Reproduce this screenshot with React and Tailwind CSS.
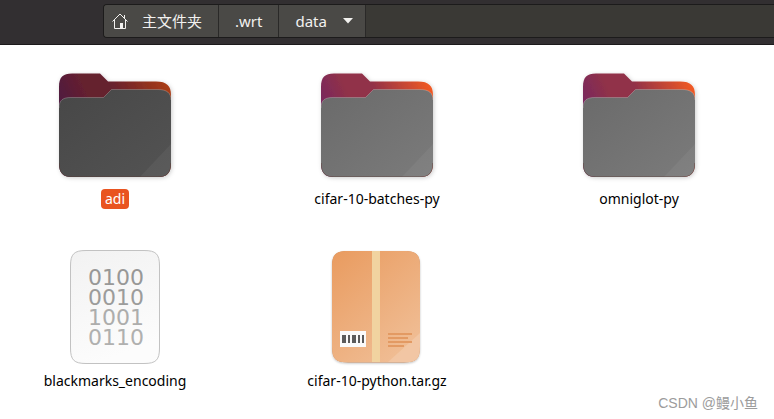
import React from 'react';

const files = [
    { name: "adi", kind: "folder", selected: true },
    { name: "cifar-10-batches-py", kind: "folder" },
    { name: "omniglot-py", kind: "folder" },
    { name: "blackmarks_encoding", kind: "binary" },
    { name: "cifar-10-python.tar.gz", kind: "archive" },
];

const binaryRows = [
    { bits: "0100", y: 42, fill: "#989897" },
    { bits: "0010", y: 62, fill: "#9c9c9b" },
    { bits: "1001", y: 82, fill: "#adadac" },
    { bits: "0110", y: 102, fill: "#b0b0af" },
];

function FolderIcon({ id, selected }) {
    const back = selected ? ["#4d1a41", "#65202f", "#a93c16"] : ["#77285f", "#913148", "#f05a24"];
    const front = selected ? ["#474747", "#535353"] : ["#6a6a6a", "#7b7b7b"];

    return (
        <svg viewBox="0 0 128 128" className="size-32" aria-hidden="true">
            <defs>
                <linearGradient id={`${id}-back`} gradientUnits="userSpaceOnUse" x1="8" y1="60" x2="120" y2="10">
                    <stop offset="0.05" stopColor={back[0]} />
                    <stop offset="0.3" stopColor={back[1]} />
                    <stop offset="0.5" stopColor={back[1]} />
                    <stop offset="0.93" stopColor={back[2]} />
                </linearGradient>
                <linearGradient id={`${id}-front`} x1="0" y1="0" x2="1" y2="1">
                    <stop offset="0" stopColor={front[0]} />
                    <stop offset="1" stopColor={front[1]} />
                </linearGradient>
                <clipPath id={`${id}-clip`}>
                    <path d="M8 47C8 39 12 36.5 20 36.5H52.5L60.5 28.5H107C116 28.5 120 32 120 39V102C120 112 116 116 107 116H21C12 116 8 112 8 102Z" />
                </clipPath>
                <filter id={`${id}-shadow`} x="-10%" y="-10%" width="125%" height="125%">
                    <feDropShadow dx="1" dy="1" stdDeviation="2" floodOpacity="0.2" />
                </filter>
            </defs>
            <path
                d="M8 26C8 16 12 12.5 21 12.5H49L57 20.5H105C116 20.5 120 25 120 34V102C120 112 116 116 107 116H21C12 116 8 112 8 102Z"
                fill={`url(#${id}-back)`}
                filter={`url(#${id}-shadow)`}
            />
            <g clipPath={`url(#${id}-clip)`}>
                <rect x="8" y="28" width="112" height="88" fill={`url(#${id}-front)`} />
                <path d="M88 117L120 83V117Z" fill="#fff" fillOpacity="0.05" />
                <path d="M8 102C8 112 12 116 21 116H107C116 116 120 112 120 102" fill="none" stroke="#5a3830" strokeOpacity="0.7" />
            </g>
            <path
                d="M8 47C8 39 12 36.5 20 36.5H52.5L60.5 28.5H107C116 28.5 120 32 120 39"
                fill="none"
                stroke="#fff"
                strokeOpacity="0.22"
            />
        </svg>
    );
}

function BinaryIcon() {
    return (
        <svg viewBox="0 0 128 128" className="size-32" aria-hidden="true">
            <defs>
                <linearGradient id="sheet" x1="0" y1="0" x2="0.3" y2="1">
                    <stop offset="0" stopColor="#f2f2f2" />
                    <stop offset="1" stopColor="#fcfcfc" />
                </linearGradient>
            </defs>
            <path
                d="M35 7.5H93C105 7.5 108.5 11 108.5 23V105C108.5 117 105 120.5 93 120.5H35C23 120.5 19.5 117 19.5 105V23C19.5 11 23 7.5 35 7.5Z"
                fill="url(#sheet)"
                stroke="#c2c2c2"
            />
            {binaryRows.map((row) => (
                <text key={row.y} x="37" y={row.y} fill={row.fill} fontSize="22" fontFamily="DejaVu Sans, sans-serif">
                    {row.bits}
                </text>
            ))}
        </svg>
    );
}

function ArchiveIcon() {
    return (
        <svg viewBox="0 0 128 128" className="size-32" aria-hidden="true">
            <defs>
                <linearGradient id="box" x1="0" y1="0" x2="0.7" y2="1">
                    <stop offset="0" stopColor="#e99b5f" />
                    <stop offset="1" stopColor="#f0bd94" />
                </linearGradient>
                <clipPath id="box-clip">
                    <path d="M35 8H91C103 8 107 11.5 107 23V104C107 116 103 119.5 91 119.5H35C23 119.5 19 116 19 104V23C19 11.5 23 8 35 8Z" />
                </clipPath>
                <filter id="box-shadow" x="-10%" y="-10%" width="125%" height="125%">
                    <feDropShadow dx="0" dy="1" stdDeviation="1" floodOpacity="0.25" />
                </filter>
            </defs>
            <path
                d="M35 8H91C103 8 107 11.5 107 23V104C107 116 103 119.5 91 119.5H35C23 119.5 19 116 19 104V23C19 11.5 23 8 35 8Z"
                fill="#c58a5f"
                filter="url(#box-shadow)"
            />
            <g clipPath="url(#box-clip)">
                <rect x="19" y="8" width="88" height="111" fill="url(#box)" />
                <rect x="59" y="8" width="8" height="111" fill="#f1d3a0" />
                <path d="M75 119L107 90V119Z" fill="#fff" fillOpacity="0.15" />
            </g>
            <rect x="27" y="88" width="26" height="16" fill="#fafafa" />
            <g fill="#5b5b5b">
                <rect x="29" y="92" width="4" height="8" />
                <rect x="35" y="92" width="2" height="8" />
                <rect x="39" y="92" width="4" height="8" />
                <rect x="45" y="92" width="2" height="8" />
                <rect x="49" y="92" width="2" height="8" />
            </g>
            <g fill="#e39a63">
                <rect x="75" y="90" width="24" height="2" />
                <rect x="75" y="94" width="20" height="2" />
                <rect x="75" y="98" width="24" height="2" />
                <rect x="75" y="102" width="16" height="2" />
            </g>
        </svg>
    );
}

function FileItem({ file }) {
    return (
        <li className="flex flex-col items-center">
            {file.kind === "folder" && <FolderIcon id={file.name} selected={file.selected} />}
            {file.kind === "binary" && <BinaryIcon />}
            {file.kind === "archive" && <ArchiveIcon />}
            <span
                className={
                    file.selected
                        ? "px-1 rounded-sm bg-[#e95420] text-white text-sm leading-5"
                        : "px-1 text-black text-sm leading-5"
                }
            >
                {file.name}
            </span>
        </li>
    );
}

export default function App() {
    return (
        <div className="min-h-screen flex flex-col bg-white font-['Noto_Sans','Noto_Sans_CJK_SC',sans-serif]">
            <header className="pt-1 pb-1.5 pl-[103px] bg-[#322f31] border-b border-[#1c1a1b]">
                <nav className="flex h-[34px] rounded-l-sm border border-r-0 border-[#1c1b1b] bg-[#3a3935] text-[#f2f1ef] text-[15px] overflow-hidden">
                    <button className="flex items-center gap-[14px] pl-2 pr-4 bg-[#4a4946] border-r border-[#2a2928]">
                        <svg viewBox="0 0 16 16" className="size-4" fill="none" stroke="currentColor" aria-hidden="true">
                            <path d="M0.5 8.5L8 1L15.5 8.5M2.5 7V15.5H13.5V7M12.5 5V2" />
                            <rect x="8" y="10" width="3" height="5" fill="currentColor" stroke="none" />
                        </svg>
                        主文件夹
                    </button>
                    <button className="px-4 bg-[#4a4946] border-r border-[#2a2928]">.wrt</button>
                    <button className="flex items-center gap-4 pl-4 pr-3 bg-[#4a4946] border-r border-[#2a2928]">
                        data
                        <svg viewBox="0 0 10 6" className="w-2.5 h-1.5" fill="currentColor" aria-hidden="true">
                            <path d="M0 0H10L5 5.5Z" />
                        </svg>
                    </button>
                </nav>
            </header>

            <main className="flex-1 pt-4 pl-[25px] pr-4">
                <ul className="grid grid-cols-[repeat(auto-fill,180px)] gap-x-[82px] gap-y-[34px]">
                    {files.map((file) => (
                        <FileItem key={file.name} file={file} />
                    ))}
                </ul>
            </main>

            <footer className="pr-4 pb-1.5 text-right text-sm leading-5 text-[#9c9c9c] font-['Liberation_Sans','Noto_Sans_CJK_SC',sans-serif]">
                CSDN @鳗小鱼
            </footer>
        </div>
    );
}
